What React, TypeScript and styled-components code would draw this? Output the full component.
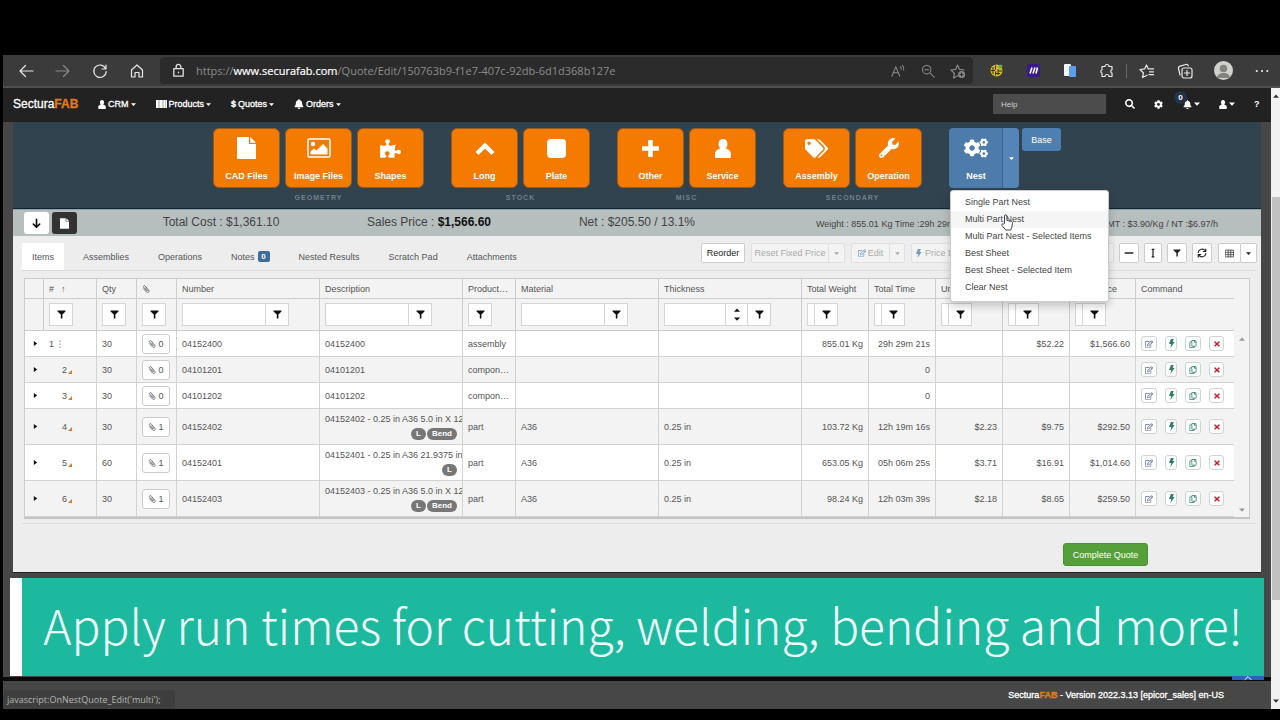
import React from "react";
import styled, { createGlobalStyle, css } from "styled-components";
import { FaWrench, FaCogs, FaTags, FaSearch, FaCog, FaBell, FaPuzzlePiece, FaRegEdit, FaRegCopy, FaTimes } from "react-icons/fa";

const Global = createGlobalStyle`
  * { box-sizing: border-box; }
  html, body { margin: 0; background: #000; }
  body { font-family: "Liberation Sans", Arial, sans-serif; font-size: 9px; color: #555; }
  button, input { font: inherit; color: inherit; margin: 0; padding: 0; }
  button { cursor: pointer; }
  a { color: inherit; text-decoration: none; }
  svg { display: block; flex: none; }
`;

/* ---------- window frame ---------- */
const Screen = styled.div`
  min-height: 100vh;
  padding: 55px 0 11px 3px;
  display: flex;
  flex-direction: column;
`;
const Chrome = styled.header`
  height: 33px;
  background: #3b3b3b;
  border-bottom: 2px solid #505050;
  display: flex;
  align-items: center;
  color: #e8e8e8;
`;
const ChromeButton = styled.button<{ $dim?: boolean; $w?: number }>`
  width: ${(p) => p.$w ?? 37}px;
  height: 28px;
  border: 0;
  background: none;
  display: flex;
  align-items: center;
  justify-content: center;
  color: ${(p) => (p.$dim ? "#8a8a8a" : "#e8e8e8")};
`;
const ChromeNav = styled.div`
  display: flex;
  padding: 0 5px 0 4px;
`;
const AddressBar = styled.div`
  flex: 1;
  height: 27px;
  margin-right: 5px;
  border-radius: 4px;
  background: #2b2b2b;
  display: flex;
  align-items: center;
  padding-left: 11px;
  gap: 10px;
  color: #e0e0e0;
`;
const Url = styled.span`
  flex: 1;
  font: 11px/16px "Open Sans", "Noto Sans", sans-serif;
  color: #8c8c8c;
  b { font-weight: 400; color: #fff; -webkit-text-stroke: 0.2px currentColor; }
`;
const AddressTools = styled.div`
  display: flex;
`;
const Divider = styled.i`
  width: 1px;
  height: 14px;
  background: #666;
`;
const Avatar = styled.span`
  width: 19px;
  height: 19px;
  border-radius: 50%;
  background: #d0d0cc;
  overflow: hidden;
`;

const Viewport = styled.div`
  flex: 1;
  display: flex;
`;
const Page = styled.div`
  flex: 1;
  min-width: 0;
  background: #474747;
  display: flex;
  flex-direction: column;
  position: relative;
`;
const PageScroll = styled.div`
  width: 9px;
  background: #f1f1f1;
  display: flex;
  flex-direction: column;
  align-items: center;
  justify-content: space-between;
  padding: 5px 0;
  color: #333;
`;
const PageThumb = styled.div`
  width: 8px;
  flex: 0 0 66%;
  background: #c1c1c1;
`;

/* ---------- application bar ---------- */
const AppBar = styled.nav`
  height: 34px;
  background: #222;
  color: #fff;
  display: flex;
  align-items: center;
  padding: 0 9px 2px 10px;
`;
const Brand = styled.a`
  font-size: 12px;
  width: 85px;
  -webkit-text-stroke: 0.3px currentColor;
`;
const Fab = styled.span`
  color: #e07b1c;
  font-weight: 700;
`;
const MenuLink = styled.button`
  border: 0;
  background: none;
  color: #fff;
  display: flex;
  align-items: center;
  gap: 2px;
  margin-right: 20px;
  white-space: nowrap;
  -webkit-text-stroke: 0.3px currentColor;
`;
const Help = styled.input`
  margin-left: auto;
  width: 113px;
  height: 20px;
  border: 0;
  background: #4c4c4c;
  padding: 0 8px;
  color: #fff;
  font-size: 8px;
  &::placeholder { color: #ccc; opacity: 1; }
`;
const IconStrip = styled.div`
  display: flex;
  align-items: center;
  padding-left: 19px;
`;
const StripButton = styled.button<{ $w: number }>`
  width: ${(p) => p.$w}px;
  height: 20px;
  border: 0;
  background: none;
  color: #fff;
  display: flex;
  align-items: center;
  gap: 2px;
  position: relative;
  font-weight: 700;
`;
const Count = styled.span`
  position: absolute;
  left: -9px;
  top: -3px;
  width: 13px;
  height: 13px;
  border-radius: 7px;
  background: #24334a;
  font-size: 8px;
  line-height: 13px;
  text-align: center;
`;

/* ---------- ribbon ---------- */
const Body = styled.main`
  margin: 0 10px;
  background: #ededed;
  border-bottom: 1px solid #222;
  flex: none;
`;
const Ribbon = styled.section`
  height: 87px;
  background: #31434f;
  border-bottom: 1px solid #16222f;
  display: flex;
  justify-content: center;
  align-items: flex-start;
  gap: 27px;
  padding-top: 6px;
`;
const Group = styled.div`
  display: grid;
  justify-items: center;
  row-gap: 6px;
`;
const Cards = styled.div`
  display: flex;
  gap: 5px;
`;
const Caption = styled.span`
  font-size: 7px;
  line-height: 8px;
  letter-spacing: 1px;
  color: #71808b;
  font-weight: 700;
`;
const tile = css`
  height: 60px;
  border: 1px solid #9a5a1c;
  border-radius: 6px;
  color: #fff;
  font-weight: 700;
  display: flex;
  flex-direction: column;
  align-items: center;
  justify-content: space-between;
  padding: 7px 0 6px;
  white-space: nowrap;
`;
const Card = styled.button`
  ${tile}
  width: 67px;
  background: #f57a00;
`;
const CardIcon = styled.span`
  height: 24px;
  display: flex;
  align-items: center;
`;
const NestGroup = styled.div`
  display: flex;
  gap: 3px;
  position: relative;
`;
const NestButton = styled.button`
  ${tile}
  width: 54px;
  background: #4d7caa;
  border-color: #4d7caa #3c658f #4d7caa #4d7caa;
  border-radius: 4px 0 0 4px;
`;
const NestSplit = styled.div`
  display: flex;
`;
const NestCaret = styled.button`
  width: 16px;
  border: 0;
  border-radius: 0 4px 4px 0;
  background: #5585b6;
  color: #fff;
  display: grid;
  place-items: center;
`;
const BaseButton = styled.button`
  width: 39px;
  height: 23px;
  border: 0;
  border-radius: 3px;
  background: #4d7fb0;
  color: #fff;
`;
const Menu = styled.ul`
  position: absolute;
  z-index: 3;
  top: 62px;
  left: 1px;
  width: 159px;
  margin: 0;
  padding: 3px 0 5px;
  list-style: none;
  background: #fff;
  border: 1px solid #ccc;
  border-radius: 3px;
  box-shadow: 0 4px 8px rgba(0, 0, 0, 0.2);
`;
const MenuItem = styled.a<{ $active?: boolean }>`
  display: block;
  padding: 0 14px;
  line-height: 17px;
  color: #444;
  white-space: nowrap;
  background: ${(p) => (p.$active ? "#f5f5f5" : "none")};
`;
const Pointer = styled.svg`
  position: absolute;
  left: 49px;
  top: 23px;
`;

/* ---------- totals ---------- */
const Totals = styled.section`
  min-height: 27px;
  background: #b7bebe;
  border-top: 1px solid #8ba3ad;
  display: grid;
  grid-template-columns: 1fr 2fr 2fr 2fr 5fr;
  align-items: center;
  color: #444;
`;
const Total = styled.span`
  padding-bottom: 2px;
  font-size: 12px;
  text-align: center;
  b { color: #111; }
`;
const TotalsButtons = styled.div`
  display: flex;
  gap: 3px;
  padding-left: 11px;
`;
const SquareButton = styled.button<{ $dark?: boolean }>`
  width: 25px;
  height: 22px;
  border: 0;
  border-radius: 3px;
  background: ${(p) => (p.$dark ? "#333" : "#fff")};
  color: ${(p) => (p.$dark ? "#fff" : "#111")};
  display: grid;
  place-items: center;
`;
const Rates = styled.div`
  display: flex;
  justify-content: space-between;
  padding: 1px 43px 0 75px;
  white-space: nowrap;
`;

/* ---------- tabs and toolbar ---------- */
const Bar = styled.div`
  margin: 0 4px 0 9px;
  height: 35px;
  border-bottom: 1px solid #ddd;
  display: flex;
  justify-content: space-between;
  align-items: flex-end;
`;
const Tabs = styled.div`
  display: flex;
  gap: 9px;
`;
const Tab = styled.button<{ $active?: boolean }>`
  height: 27px;
  border: 0;
  padding: 0 10px;
  background: ${(p) => (p.$active ? "#fff" : "none")};
  display: flex;
  align-items: center;
  gap: 3px;
  white-space: nowrap;
`;
const Badge = styled.span`
  width: 12px;
  height: 11px;
  border-radius: 2px;
  background: #3f6d95;
  color: #fff;
  font-size: 8px;
  font-weight: 700;
  line-height: 11px;
`;
const Tools = styled.div`
  display: flex;
  gap: 6px;
  padding-bottom: 7px;
`;
const Split = styled.div`
  display: flex;
`;
const ToolButton = styled.button<{ $w: number; $off?: boolean; $start?: boolean }>`
  width: ${(p) => p.$w}px;
  height: 20px;
  border: 1px solid ${(p) => (p.$off ? "#e0e0e0" : "#ccc")};
  border-radius: 2px;
  background: ${(p) => (p.$off ? "#f3f3f3" : "#fff")};
  color: ${(p) => (p.$off ? "#aaa" : "#222")};
  display: flex;
  align-items: center;
  justify-content: ${(p) => (p.$start ? "flex-start" : "center")};
  padding: 0 2px;
  gap: 2px;
  white-space: nowrap;
  & + & { margin-left: -1px; }
`;

/* ---------- grid ---------- */
const GridFrame = styled.div`
  margin: 7px 11px 0;
  border: 1px solid #ccc;
  border-bottom: 2px solid #c4c4c4;
  display: flex;
`;
const TableWrap = styled.div`
  flex: 1;
  min-width: 0;
`;
const Table = styled.table`
  width: 100%;
  table-layout: fixed;
  border-collapse: separate;
  border-spacing: 0;
`;
const HeadCell = styled.th<{ $h: number }>`
  height: ${(p) => p.$h}px;
  padding: 0 5px;
  background: #f3f3f3;
  border-right: 1px solid #ccc;
  border-bottom: 1px solid #ccc;
  font-weight: 400;
  text-align: left;
  white-space: nowrap;
  overflow: hidden;
  text-overflow: ellipsis;
`;
const Sort = styled.span`
  margin-left: 7px;
`;
const FilterRow = styled.div`
  display: flex;
`;
const FilterInput = styled.input<{ $w: number }>`
  width: ${(p) => p.$w}px;
  height: 23px;
  border: 1px solid #d5d5d5;
  background: #fff;
`;
const FilterButton = styled.button`
  width: 24px;
  height: 23px;
  border: 1px solid #d5d5d5;
  background: #fff;
  color: #111;
  display: grid;
  place-items: center;
  * + & { margin-left: -1px; }
`;
const Spinner = styled.span`
  width: 23px;
  margin-left: -1px;
  border: 1px solid #d5d5d5;
  background: #fff;
  color: #111;
  display: flex;
  flex-direction: column;
  align-items: center;
  justify-content: space-evenly;
`;
const Row = styled.tr<{ $alt: boolean; $tall: boolean }>`
  height: ${(p) => (p.$tall ? 36 : 26)}px;
  background: ${(p) => (p.$alt ? "#f3f3f3" : "#fff")};
`;
const Cell = styled.td<{ $right?: boolean; $open?: boolean }>`
  padding: 0 5px;
  border-right: ${(p) => (p.$open ? 0 : 1)}px solid #d2d2d2;
  border-bottom: 1px solid #d2d2d2;
  text-align: ${(p) => (p.$right ? "right" : "left")};
  white-space: nowrap;
  overflow: hidden;
  text-overflow: ellipsis;
`;
const ExpandButton = styled.button`
  border: 0;
  background: none;
  color: #111;
  padding: 0 3px;
  display: block;
`;
const RowNumber = styled.span<{ $child: boolean }>`
  display: flex;
  align-items: center;
  gap: ${(p) => (p.$child ? 1 : 2)}px;
  padding-left: ${(p) => (p.$child ? 13 : 0)}px;
`;
const Corner = styled.i`
  margin-top: 5px;
  border-left: 4px solid transparent;
  border-bottom: 4px solid #d9772b;
`;
const ClipButton = styled.button`
  width: 28px;
  height: 20px;
  border: 1px solid #ccc;
  border-radius: 3px;
  background: #fff;
  display: flex;
  align-items: center;
  justify-content: center;
  gap: 2px;
`;
const Clipped = styled.div`
  margin-right: -5px;
  overflow: hidden;
  line-height: 12px;
`;
const Pills = styled.div`
  display: flex;
  justify-content: flex-end;
  gap: 1px;
  padding-top: 3px;
`;
const Pill = styled.span`
  height: 12px;
  padding: 0 5px;
  border-radius: 6px;
  background: #777;
  color: #fff;
  font-size: 8px;
  font-weight: 700;
  line-height: 12px;
`;
const Commands = styled.div`
  display: flex;
  gap: 8px;
`;
const CommandButton = styled.button<{ $w: number; $c: string }>`
  width: ${(p) => p.$w}px;
  height: 15px;
  border: 1px solid #ccd5d5;
  border-radius: 3px;
  background: #fff;
  color: ${(p) => p.$c};
  display: grid;
  place-items: center;
`;
const GridScroll = styled.div`
  width: 15px;
  background: #f3f3f3;
  color: #999;
  display: flex;
  flex-direction: column;
  justify-content: space-between;
  align-items: center;
  padding: 57px 0 4px;
`;
const Actions = styled.div`
  margin: 4px 4px 0 9px;
  border-top: 1px solid #ddd;
  padding: 19px 109px 6px 0;
  display: flex;
  justify-content: flex-end;
`;
const Complete = styled.button`
  width: 85px;
  height: 23px;
  border: 1px solid #4c8f37;
  border-radius: 3px;
  background: #56a03c;
  color: #fff;
`;

/* ---------- banner and footer ---------- */
const Banner = styled.section`
  margin: 5px 7px 0;
  height: 98px;
  background: #1cb99f;
  border-left: 12px solid #fff;
  color: #f0fffc;
  font: 300 48px/92px "Noto Sans CJK SC", "Open Sans", sans-serif;
  text-align: center;
  white-space: nowrap;
`;
const Footer = styled.footer`
  flex: 1;
  margin-top: 1px;
  border-top: 4px solid #0a0a0a;
  display: flex;
  justify-content: space-between;
  align-items: center;
`;
const LinkStatus = styled.span`
  align-self: flex-end;
  height: 19px;
  padding: 0 14px 0 4px;
  background: #3e3e3e;
  color: #b5b5b5;
  border-radius: 0 3px 0 0;
  font: 9px/19px "Open Sans", "Noto Sans", sans-serif;
`;
const Version = styled.span`
  padding-right: 47px;
  color: #fff;
  -webkit-text-stroke: 0.3px currentColor;
`;
const ToTop = styled.a`
  position: absolute;
  right: 7px;
  bottom: 29px;
  width: 32px;
  height: 4px;
  background: #2a62c0;
  color: #fff;
  display: grid;
  justify-items: center;
`;

/* ---------- drawings ---------- */
const Tri = ({ d = "down", s = 6 }: { d?: "down" | "up" | "right"; s?: number }) => (
  <svg width={s} height={s} viewBox="0 0 6 6" fill="currentColor">
    <path d={d === "down" ? "M0 1.5h6L3 4.8z" : d === "up" ? "M0 4.8h6L3 1.5z" : "M1 0l4 3-4 3z"} />
  </svg>
);
const Funnel = ({ s = 9 }: { s?: number }) => (
  <svg width={s} height={s} viewBox="0 0 9 9" fill="currentColor">
    <path d="M0.5 0.5h8v1L5.4 4.6v3.9H3.8V4.6L0.5 1.5z" />
  </svg>
);
const Line = ({ s = 16, w = 1.2, children }: { s?: number; w?: number; children: React.ReactNode }) => (
  <svg width={s} height={s} viewBox="0 0 16 16" fill="none" stroke="currentColor" strokeWidth={w} strokeLinecap="round" strokeLinejoin="round">
    {children}
  </svg>
);
const Clip = () => (
  <Line s={8} w={1.5}>
    <path d="M3 7.500l6 6.500a2.800 2.800 0 0 0 4.600-3.500L6.500 2a2 2 0 0 0-3.300 2.500l6.300 7a1 1 0 0 0 1.700-1.200L6.500 5.500" />
  </Line>
);
const Bolt = ({ s = 9, color = "currentColor" }: { s?: number; color?: string }) => (
  <svg width={s} height={s} viewBox="0 0 16 16" fill={color}>
    <path d="M7 0h5L10 5.500h3.500L6 16l1.500-7H3.500z" />
  </svg>
);
const FileShape = ({ w, h }: { w: number; h: number }) => (
  <svg width={w} height={h} viewBox="0 0 19 22" fill="currentColor">
    <path d="M0 0h12v7h7v15H0zM13.3 0L19 5.8h-5.7z" />
  </svg>
);
const PictureShape = () => (
  <svg width="24" height="20" viewBox="0 0 24 20">
    <rect x="1" y="1" width="22" height="18" rx="1.5" fill="none" stroke="currentColor" strokeWidth="1.5" />
    <circle cx="6" cy="6" r="2.2" fill="currentColor" />
    <path fill="currentColor" d="M3.500 16.500v-3l3.500-3 2.500 2 6.500-6.500 4.500 4.500v6z" />
  </svg>
);
const PersonShape = ({ w, h }: { w: number; h: number }) => (
  <svg width={w} height={h} viewBox="0 0 16 19" fill="currentColor">
    <path d="M8 0c2.800 0 4.500 2 4.500 4.900 0 2.100-1 3.800-2 4.700C13.500 10.500 16 12 16 15v2.500c0 1-.6 1.500-1.500 1.500h-13C.6 19 0 18.500 0 17.500V15c0-3 2.500-4.500 5.500-5.400-1-.9-2-2.600-2-4.700C3.500 2 5.200 0 8 0z" />
  </svg>
);
const Barcode = () => (
  <svg width="11" height="8" viewBox="0 0 11 8" fill="currentColor">
    <rect width="11" height="8" opacity="0.55" />
    <path d="M0 0h2v8H0zM2.500 0h1v8h-1zM4 0h2v8H4zM6.500 0h1v8h-1zM8 0h1v8H8zM9.500 0H11v8H9.500z" />
  </svg>
);

const groups = [
  {
    name: "GEOMETRY",
    cards: [
      { label: "CAD Files", icon: <FileShape w={19} h={22} /> },
      { label: "Image Files", icon: <PictureShape /> },
      { label: "Shapes", icon: <FaPuzzlePiece size={21} /> },
    ],
  },
  {
    name: "STOCK",
    cards: [
      {
        label: "Long",
        icon: (
          <svg width="20" height="16" viewBox="0 0 20 16" fill="none" stroke="currentColor" strokeWidth="4.400">
            <path d="M2 13.500l8-8 8 8" />
          </svg>
        ),
      },
      {
        label: "Plate",
        icon: (
          <svg width="19" height="19">
            <rect width="19" height="19" rx="4" fill="currentColor" />
          </svg>
        ),
      },
    ],
  },
  {
    name: "MISC",
    cards: [
      {
        label: "Other",
        icon: (
          <svg width="17" height="17" viewBox="0 0 17 17" stroke="currentColor" strokeWidth="4.600">
            <path d="M0 8.500h17M8.500 0v17" />
          </svg>
        ),
      },
      { label: "Service", icon: <PersonShape w={16} h={19} /> },
    ],
  },
  {
    name: "SECONDARY",
    cards: [
      { label: "Assembly", icon: <FaTags size={23} /> },
      { label: "Operation", icon: <FaWrench size={20} /> },
    ],
  },
];

const menu = ["Single Part Nest", "Multi Part Nest", "Multi Part Nest - Selected Items", "Best Sheet", "Best Sheet - Selected Item", "Clear Nest"];

const columns = [
  { w: 19, t: "", f: "none" },
  { w: 53, t: "#", f: "button" },
  { w: 40, t: "Qty", f: "button" },
  { w: 40, t: "clip", f: "button" },
  { w: 143, t: "Number", f: "text" },
  { w: 143, t: "Description", f: "text" },
  { w: 53, t: "Product Type", f: "button" },
  { w: 143, t: "Material", f: "text" },
  { w: 143, t: "Thickness", f: "spin" },
  { w: 67, t: "Total Weight", f: "slim" },
  { w: 67, t: "Total Time", f: "slim" },
  { w: 67, t: "Unit Cost", f: "slim" },
  { w: 67, t: "Unit Price", f: "slim" },
  { w: 66, t: "Total Price", f: "slim" },
  { w: 100, t: "Command", f: "none" },
];

type Item = { n: number; q: number; c: number; no: string; d: string; p: string; m?: string; th?: string; v: string[]; pills?: string[] };
const items: Item[] = [
  { n: 1, q: 30, c: 0, no: "04152400", d: "04152400", p: "assembly", v: ["855.01 Kg", "29h 29m 21s", "", "$52.22", "$1,566.60"] },
  { n: 2, q: 30, c: 0, no: "04101201", d: "04101201", p: "component", v: ["", "0", "", "", ""] },
  { n: 3, q: 30, c: 0, no: "04101202", d: "04101202", p: "component", v: ["", "0", "", "", ""] },
  { n: 4, q: 30, c: 1, no: "04152402", d: "04152402 - 0.25 in A36 5.0 in X 12.0 in", p: "part", m: "A36", th: "0.25 in", v: ["103.72 Kg", "12h 19m 16s", "$2.23", "$9.75", "$292.50"], pills: ["L", "Bend"] },
  { n: 5, q: 60, c: 1, no: "04152401", d: "04152401 - 0.25 in A36 21.9375 in X 12.0 in", p: "part", m: "A36", th: "0.25 in", v: ["653.05 Kg", "05h 06m 25s", "$3.71", "$16.91", "$1,014.60"], pills: ["L"] },
  { n: 6, q: 30, c: 1, no: "04152403", d: "04152403 - 0.25 in A36 5.0 in X 12.0 in", p: "part", m: "A36", th: "0.25 in", v: ["98.24 Kg", "12h 03m 39s", "$2.18", "$8.65", "$259.50"], pills: ["L", "Bend"] },
];

const Filter = ({ kind, name }: { kind: string; name: string }) => {
  if (kind === "none") return null;
  return (
    <FilterRow>
      {kind === "text" && <FilterInput $w={84} aria-label={`Filter ${name}`} />}
      {kind === "spin" && <FilterInput $w={62} aria-label={`Filter ${name}`} />}
      {kind === "slim" && <FilterInput $w={8} aria-label={`Filter ${name}`} />}
      {kind === "spin" && (
        <Spinner>
          <Tri d="up" />
          <Tri />
        </Spinner>
      )}
      <FilterButton aria-label={`Filter options for ${name}`}>
        <Funnel />
      </FilterButton>
    </FilterRow>
  );
};

export default function App() {
  return (
    <Screen>
      <Global />
      <Chrome>
        <ChromeNav>
          <ChromeButton aria-label="Back"><Line><path d="M15 8H2M7.500 2.500L2 8l5.500 5.500" /></Line></ChromeButton>
          <ChromeButton $dim aria-label="Forward"><Line><path d="M1 8h13M8.500 2.500L14 8l-5.500 5.500" /></Line></ChromeButton>
          <ChromeButton aria-label="Reload"><Line><path d="M13.800 6A6.200 6.200 0 1 0 14.200 8.500M14 2v4h-4" /></Line></ChromeButton>
          <ChromeButton aria-label="Home"><Line><path d="M2.500 7L8 2l5.500 5v7H10v-4.500H6V14H2.500z" /></Line></ChromeButton>
        </ChromeNav>
        <AddressBar>
          <Line s={15} w={1.4}><path d="M3 6h10v8H3zM5.500 6V4a2.500 2.500 0 0 1 5 0v2M8 9.800v.6" /></Line>
          <Url>https://<b>www.securafab.com</b>/Quote/Edit/150763b9-f1e7-407c-92db-6d1d368b127e</Url>
          <AddressTools>
            <ChromeButton $w={30} $dim aria-label="Read aloud"><Line s={14}><path d="M1 14L5.500 3 10 14M2.700 10h5.600M10.500 3c1 .8 1.300 2 1 3M13 1.500c1.500 1.500 2 3.500 1.500 5.500" /></Line></ChromeButton>
            <ChromeButton $w={30} $dim aria-label="Zoom"><Line s={14}><circle cx="6.500" cy="6.500" r="4.800" /><path d="M10 10l5 5M4.300 6.500h4.400" /></Line></ChromeButton>
            <ChromeButton $w={30} $dim aria-label="Add favourite"><Line><path d="M7.500 13L3.500 15l1-4.500L1 7l4.600-.6L7.500 2l2 4.400L14 7" /><circle cx="11.500" cy="11.500" r="3" fill="currentColor" /><path d="M11.500 10v3M10 11.500h3" stroke="#2b2b2b" /></Line></ChromeButton>
          </AddressTools>
        </AddressBar>
        <ChromeButton $w={37} aria-label="Extension one">
          <svg width="13" height="13" viewBox="0 0 13 13"><circle cx="6.500" cy="6.500" r="6" fill="#d6b91e" /><path d="M3 3v7M5.500 1.500v4M5.500 7.500v4M8 5v6M1 6.500h4M8 7h4M10 9.500H6" stroke="#3a3500" fill="none" /><circle cx="10.500" cy="2.500" r="2" fill="#5cae45" /></svg>
        </ChromeButton>
        <ChromeButton $w={36} aria-label="Extension two">
          <svg width="13" height="13" viewBox="0 0 13 13"><rect width="13" height="13" rx="2" fill="#3a1a8a" /><path d="M3 9.500l2-6M6 9.500l2-6M9 9.500l1.500-6" stroke="#fff" strokeWidth="1.600" /></svg>
        </ChromeButton>
        <ChromeButton $w={37} aria-label="Extension three">
          <svg width="12" height="13" viewBox="0 0 12 13"><rect width="7" height="12" rx="1" fill="#f4f8ff" /><rect x="5" y="2" width="7" height="11" rx="1" fill="#5c9df0" /></svg>
        </ChromeButton>
        <ChromeButton $w={38} aria-label="Extensions"><Line><path d="M3 3.500h3a2 2 0 0 1 4 0h3v3.200a1.800 1.800 0 0 0 0 3.400v3.400h-3a2 2 0 0 0-4 0H3v-3.300a1.900 1.900 0 0 1 0-3.500z" /></Line></ChromeButton>
        <Divider />
        <ChromeButton $w={40} aria-label="Favourites"><Line><path d="M8 12.200L3.500 14.500l1-4.500L1 6.500l4.600-.6L7.500 2l1.800 3.900h5.200M10.500 8.800h4M10 11.700h4.500" /></Line></ChromeButton>
        <ChromeButton $w={36} aria-label="Collections"><Line><rect x="5" y="5" width="10" height="10" rx="2" /><path d="M10 7.500v5M7.500 10h5M3 12L1.500 5.500a2 2 0 0 1 1.500-2.300l6-1.700a2 2 0 0 1 2.300 1.400" /></Line></ChromeButton>
        <ChromeButton $w={40} aria-label="Profile">
          <Avatar><svg width="19" height="19" viewBox="0 0 19 19" fill="#84847f"><circle cx="9.500" cy="7.500" r="3.800" /><path d="M3 17c0-3.500 3-5 6.500-5s6.500 1.500 6.500 5z" /></svg></Avatar>
        </ChromeButton>
        <ChromeButton $w={37} aria-label="More"><Line s={14}><path d="M2 8h.1M8 8h.1M14 8h.1" strokeWidth="2.400" /></Line></ChromeButton>
      </Chrome>

      <Viewport>
        <Page>
          <AppBar>
            <Brand href="#">Sectura<Fab>FAB</Fab></Brand>
            <MenuLink><PersonShape w={8} h={9} />CRM<Tri s={5} /></MenuLink>
            <MenuLink><Barcode />Products<Tri s={5} /></MenuLink>
            <MenuLink><b>$</b>Quotes<Tri s={5} /></MenuLink>
            <MenuLink><FaBell size={10} />Orders<Tri s={5} /></MenuLink>
            <Help placeholder="Help" aria-label="Help" />
            <IconStrip>
              <StripButton $w={29} aria-label="Search"><FaSearch size={10} /></StripButton>
              <StripButton $w={29} aria-label="Settings"><FaCog size={9} /></StripButton>
              <StripButton $w={36} aria-label="Alerts"><FaBell size={9} /><Tri /><Count>0</Count></StripButton>
              <StripButton $w={35} aria-label="Account"><PersonShape w={8} h={9} /><Tri /></StripButton>
              <StripButton $w={8} aria-label="About">?</StripButton>
            </IconStrip>
          </AppBar>

          <Body>
            <Ribbon>
              {groups.map((g) => (
                <Group key={g.name}>
                  <Cards>
                    {g.cards.map((c) => (
                      <Card key={c.label}><CardIcon>{c.icon}</CardIcon>{c.label}</Card>
                    ))}
                  </Cards>
                  <Caption>{g.name}</Caption>
                </Group>
              ))}
              <NestGroup>
                <NestSplit>
                  <NestButton><CardIcon><FaCogs size={24} /></CardIcon>Nest</NestButton>
                  <NestCaret aria-label="Nest options"><Tri s={5} /></NestCaret>
                </NestSplit>
                <BaseButton>Base</BaseButton>
                <Menu>
                  {menu.map((m, i) => (
                    <li key={m}><MenuItem href="#" $active={i === 1}>{m}</MenuItem></li>
                  ))}
                  <Pointer width="14" height="17" viewBox="0 0 14 17" fill="#fff" stroke="#444" strokeLinejoin="round">
                    <path d="M4.500 9.500V2a1.200 1.200 0 0 1 2.400 0v4.500l4 .8c1.300.3 1.800 1 1.600 2.200l-.8 4-1 2.500H5.800L2 11.500C1.200 10.300 2.500 9.300 3.500 10z" />
                  </Pointer>
                </Menu>
              </NestGroup>
            </Ribbon>

            <Totals>
              <TotalsButtons>
                <SquareButton aria-label="Expand"><Line s={11} w={2.4}><path d="M8 2v11M3.500 9L8 13.500 12.500 9" /></Line></SquareButton>
                <SquareButton $dark aria-label="Document"><FileShape w={9} h={11} /></SquareButton>
              </TotalsButtons>
              <Total>Total Cost : $1,361.10</Total>
              <Total>Sales Price : <b>$1,566.60</b></Total>
              <Total>Net : $205.50 / 13.1%</Total>
              <Rates><span>Weight : 855.01 Kg Time :29h 29m 21s</span><span>MT : $3.90/Kg / NT :$6.97/h</span></Rates>
            </Totals>

            <Bar>
              <Tabs>
                <Tab $active>Items</Tab>
                <Tab>Assemblies</Tab>
                <Tab>Operations</Tab>
                <Tab>Notes <Badge>0</Badge></Tab>
                <Tab>Nested Results</Tab>
                <Tab>Scratch Pad</Tab>
                <Tab>Attachments</Tab>
              </Tabs>
              <Tools>
                <ToolButton $w={44}>Reorder</ToolButton>
                <Split><ToolButton $w={78} $off>Reset Fixed Price</ToolButton><ToolButton $w={17} $off aria-label="Reset options"><Tri s={5} /></ToolButton></Split>
                <Split><ToolButton $w={39} $off><FaRegEdit size={8} color="#6f9bc4" />Edit</ToolButton><ToolButton $w={16} $off aria-label="Edit options"><Tri s={5} /></ToolButton></Split>
                <ToolButton $w={72} $off $start><Bolt color="#6f9bc4" />Price Break</ToolButton>
                <ToolButton $w={126} $off aria-label="More tools" />
                <ToolButton $w={20} aria-label="Collapse"><Line s={10} w={2.6}><path d="M2 8h12" /></Line></ToolButton>
                <ToolButton $w={18} aria-label="Row height"><Line s={10} w={2}><path d="M8 2v12M6.500 2h3M6.500 14h3" /></Line></ToolButton>
                <ToolButton $w={20} aria-label="Filter"><Funnel s={8} /></ToolButton>
                <ToolButton $w={20} aria-label="Refresh"><Line s={10} w={1.8}><path d="M2 7a6 6 0 0 1 11-2.500M14 1.500v4h-4M14 9a6 6 0 0 1-11 2.500M2 14.500v-4h4" /></Line></ToolButton>
                <Split><ToolButton $w={23} aria-label="Columns"><Line s={9} w={1.2}><path d="M1 2h14v12H1zM1 6h14M1 10h14M5.700 2v12M10.300 2v12" /></Line></ToolButton><ToolButton $w={17} aria-label="Column options"><Tri s={5} /></ToolButton></Split>
              </Tools>
            </Bar>

            <GridFrame>
              <TableWrap>
                <Table>
                  <colgroup>{columns.map((c, i) => <col key={i} style={{ width: c.w }} />)}</colgroup>
                  <thead>
                    <tr>
                      {columns.map((c, i) => (
                        <HeadCell $h={20} key={i}>
                          {c.t === "clip" ? <Clip /> : c.t}
                          {c.t === "#" && <Sort>↑</Sort>}
                        </HeadCell>
                      ))}
                    </tr>
                    <tr>{columns.map((c, i) => <HeadCell $h={32} as="td" key={i}><Filter kind={c.f} name={c.t} /></HeadCell>)}</tr>
                  </thead>
                  <tbody>
                    {items.map((r, i) => (
                      <Row key={r.n} $alt={i % 2 === 1} $tall={!!r.pills}>
                        <Cell $open><ExpandButton aria-label={`Expand row ${r.n}`}><Tri d="right" s={5} /></ExpandButton></Cell>
                        <Cell><RowNumber $child={i > 0}>{r.n}{i > 0 ? <Corner /> : <Line s={8} w={2.4}><path d="M8 2v.1M8 8v.1M8 14v.1" /></Line>}</RowNumber></Cell>
                        <Cell>{r.q}</Cell>
                        <Cell><ClipButton><Clip />{r.c}</ClipButton></Cell>
                        <Cell>{r.no}</Cell>
                        <Cell>
                          {r.pills ? (
                            <>
                              <Clipped>{r.d}</Clipped>
                              <Pills>{r.pills.map((p) => <Pill key={p}>{p}</Pill>)}</Pills>
                            </>
                          ) : r.d}
                        </Cell>
                        <Cell>{r.p}</Cell>
                        <Cell>{r.m}</Cell>
                        <Cell>{r.th}</Cell>
                        {r.v.map((v, k) => <Cell key={k} $right>{v}</Cell>)}
                        <Cell $open>
                          <Commands>
                            <CommandButton $w={16} $c="#5b6a9a" aria-label="Edit"><FaRegEdit size={8} /></CommandButton>
                            <CommandButton $w={12} $c="#2c8067" aria-label="Price"><Bolt /></CommandButton>
                            <CommandButton $w={16} $c="#2c8067" aria-label="Copy"><FaRegCopy size={8} /></CommandButton>
                            <CommandButton $w={15} $c="#c01f2c" aria-label="Delete"><FaTimes size={8} /></CommandButton>
                          </Commands>
                        </Cell>
                      </Row>
                    ))}
                  </tbody>
                </Table>
              </TableWrap>
              <GridScroll><Tri d="up" /><Tri /></GridScroll>
            </GridFrame>

            <Actions><Complete>Complete Quote</Complete></Actions>
          </Body>

          <Banner>Apply run times for cutting, welding, bending and more!</Banner>
          <Footer>
            <LinkStatus>javascript:OnNestQuote_Edit('multi');</LinkStatus>
            <Version>Sectura<Fab>FAB</Fab> - Version 2022.3.13 [epicor_sales] en-US</Version>
          </Footer>
          <ToTop href="#" aria-label="Back to top"><Line s={8} w={2}><path d="M2 7l6-6 6 6" /></Line></ToTop>
        </Page>
        <PageScroll><Tri d="up" /><PageThumb /><Tri /></PageScroll>
      </Viewport>
    </Screen>
  );
}
